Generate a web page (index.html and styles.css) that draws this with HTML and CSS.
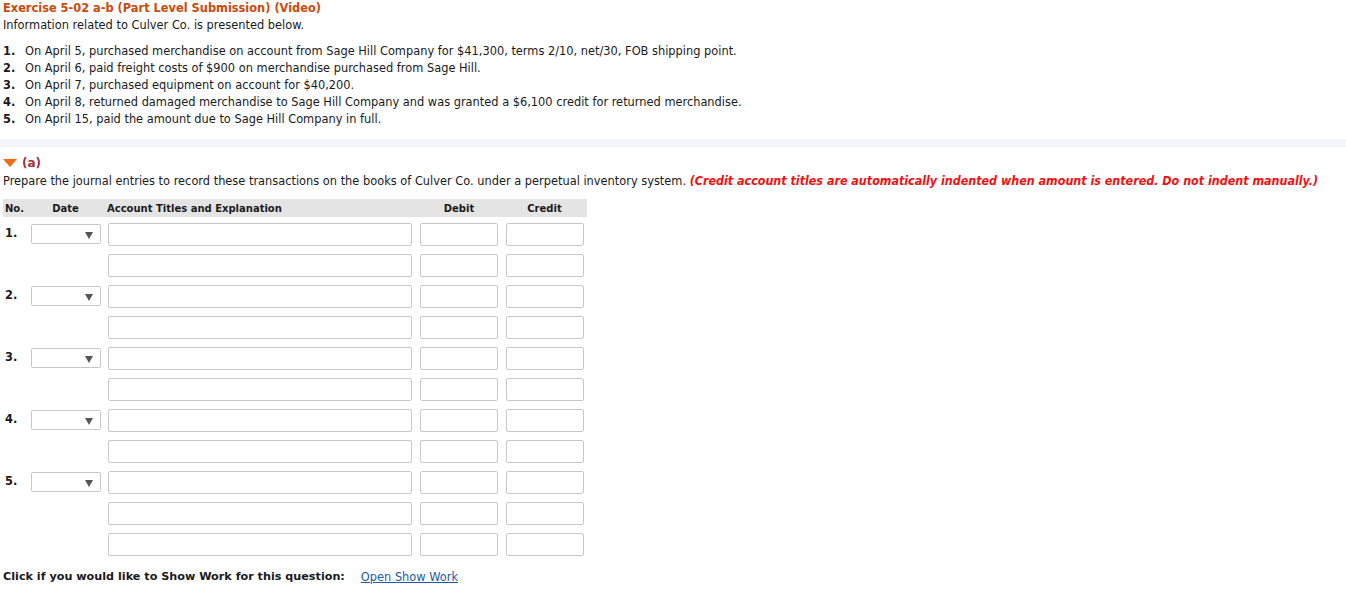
FILE: index.html
```html
<!DOCTYPE html>
<html>
<head>
<meta charset="utf-8">
<link rel="stylesheet" href="styles.css">
</head>
<body>
<div class="page">
  <div class="title">Exercise 5-02 a-b (Part Level Submission) (Video)</div>
  <div class="intro">Information related to Culver Co. is presented below.</div>
  <ol class="items">
    <li><span class="num">1.</span><span>On April 5, purchased merchandise on account from Sage Hill Company for $41,300, terms 2/10, net/30, FOB shipping point.</span></li>
    <li><span class="num">2.</span><span>On April 6, paid freight costs of $900 on merchandise purchased from Sage Hill.</span></li>
    <li><span class="num">3.</span><span>On April 7, purchased equipment on account for $40,200.</span></li>
    <li><span class="num">4.</span><span>On April 8, returned damaged merchandise to Sage Hill Company and was granted a $6,100 credit for returned merchandise.</span></li>
    <li><span class="num">5.</span><span>On April 15, paid the amount due to Sage Hill Company in full.</span></li>
  </ol>
</div>
<div class="band"></div>
<div class="page">
  <div class="part"><span class="tri"></span><span class="part-label">(a)</span></div>
  <div class="prompt">Prepare the journal entries to record these transactions on the books of Culver Co. under a perpetual inventory system. <span class="note">(Credit account titles are automatically indented when amount is entered. Do not indent manually.)</span></div>

  <div class="journal">
    <div class="jrow head">
      <div class="c-no">No.</div>
      <div class="c-date">Date</div>
      <div class="c-acct">Account Titles and Explanation</div>
      <div class="c-dr">Debit</div>
      <div class="c-cr">Credit</div>
    </div>

    <div class="jrow"><div class="c-no lbl">1.</div><div class="c-date"><div class="sel"><span class="arrow"></span></div></div><div class="c-acct"><div class="inp wide"></div></div><div class="c-dr"><div class="inp amt"></div></div><div class="c-cr"><div class="inp amt"></div></div></div>
    <div class="jrow"><div class="c-no"></div><div class="c-date"></div><div class="c-acct"><div class="inp wide"></div></div><div class="c-dr"><div class="inp amt"></div></div><div class="c-cr"><div class="inp amt"></div></div></div>

    <div class="jrow"><div class="c-no lbl">2.</div><div class="c-date"><div class="sel"><span class="arrow"></span></div></div><div class="c-acct"><div class="inp wide"></div></div><div class="c-dr"><div class="inp amt"></div></div><div class="c-cr"><div class="inp amt"></div></div></div>
    <div class="jrow"><div class="c-no"></div><div class="c-date"></div><div class="c-acct"><div class="inp wide"></div></div><div class="c-dr"><div class="inp amt"></div></div><div class="c-cr"><div class="inp amt"></div></div></div>

    <div class="jrow"><div class="c-no lbl">3.</div><div class="c-date"><div class="sel"><span class="arrow"></span></div></div><div class="c-acct"><div class="inp wide"></div></div><div class="c-dr"><div class="inp amt"></div></div><div class="c-cr"><div class="inp amt"></div></div></div>
    <div class="jrow"><div class="c-no"></div><div class="c-date"></div><div class="c-acct"><div class="inp wide"></div></div><div class="c-dr"><div class="inp amt"></div></div><div class="c-cr"><div class="inp amt"></div></div></div>

    <div class="jrow"><div class="c-no lbl">4.</div><div class="c-date"><div class="sel"><span class="arrow"></span></div></div><div class="c-acct"><div class="inp wide"></div></div><div class="c-dr"><div class="inp amt"></div></div><div class="c-cr"><div class="inp amt"></div></div></div>
    <div class="jrow"><div class="c-no"></div><div class="c-date"></div><div class="c-acct"><div class="inp wide"></div></div><div class="c-dr"><div class="inp amt"></div></div><div class="c-cr"><div class="inp amt"></div></div></div>

    <div class="jrow"><div class="c-no lbl">5.</div><div class="c-date"><div class="sel"><span class="arrow"></span></div></div><div class="c-acct"><div class="inp wide"></div></div><div class="c-dr"><div class="inp amt"></div></div><div class="c-cr"><div class="inp amt"></div></div></div>
    <div class="jrow"><div class="c-no"></div><div class="c-date"></div><div class="c-acct"><div class="inp wide"></div></div><div class="c-dr"><div class="inp amt"></div></div><div class="c-cr"><div class="inp amt"></div></div></div>
    <div class="jrow"><div class="c-no"></div><div class="c-date"></div><div class="c-acct"><div class="inp wide"></div></div><div class="c-dr"><div class="inp amt"></div></div><div class="c-cr"><div class="inp amt"></div></div></div>
  </div>

  <div class="showwork"><span class="sw-label">Click if you would like to Show Work for this question:</span><a class="sw-link" href="#">Open Show Work</a></div>
</div>
</body>
</html>
```

FILE: styles.css
```css
html, body {
  margin: 0;
  padding: 0;
  background: #ffffff;
}
body {
  font-family: "DejaVu Sans", Verdana, sans-serif;
  font-size: 11.4px;
  color: #1a1a1a;
}
.page {
  padding-left: 3px;
}
.title {
  font-size: 11.4px;
  font-weight: bold;
  color: #cc4a0a;
  line-height: 14px;
  padding-top: 1px;
}
.intro {
  line-height: 14px;
  margin-top: 3px;
}
.items {
  list-style: none;
  margin: 11px 0 0 0;
  padding: 0;
}
.items li {
  display: flex;
  line-height: 17px;
}
.items .num {
  font-weight: bold;
  width: 22px;
  flex: none;
}
.band {
  height: 8px;
  background: #f4f7fa;
  margin-top: 11px;
}
.part {
  display: flex;
  align-items: center;
  gap: 5px;
  margin-top: 9px;
  height: 14px;
}
.tri {
  width: 0;
  height: 0;
  border-left: 7px solid transparent;
  border-right: 7px solid transparent;
  border-top: 8px solid #f26a1b;
}
.part-label {
  color: #a2303c;
  font-weight: bold;
  font-size: 12px;
}
.prompt {
  margin-top: 4px;
  line-height: 14px;
}
.note {
  color: #ee1111;
  font-weight: bold;
  font-style: italic;
  font-family: "DejaVu Sans Condensed", "DejaVu Sans", sans-serif;
  font-size: 12.4px;
}
.journal {
  margin-top: 11px;
  width: 584px;
  display: flex;
  flex-direction: column;
  gap: 8px;
}
.jrow {
  display: grid;
  grid-template-columns: 28px 73px 312px 86px 85px;
  align-items: start;
}
.jrow.head {
  background: #e4e4e4;
  height: 18px;
  align-items: center;
  font-weight: bold;
  font-size: 10px;
  margin-bottom: -2px;
}
.head .c-no { padding-left: 2px; }
.head .c-date { text-align: center; padding-right: 4px; }
.head .c-acct { padding-left: 3px; }
.head .c-dr, .head .c-cr { text-align: center; }
.lbl {
  font-weight: bold;
  padding-left: 2px;
  line-height: 20px;
}
.sel {
  position: relative;
  width: 68px;
  height: 18px;
  border: 1px solid #c8c8c8;
  border-radius: 2px;
  margin-top: 1px;
  background: #fff;
}
.arrow {
  position: absolute;
  right: 7px;
  top: 7px;
  width: 0;
  height: 0;
  border-left: 4px solid transparent;
  border-right: 4px solid transparent;
  border-top: 7px solid #555;
}
.inp {
  height: 21px;
  border: 1px solid #c8c8c8;
  border-radius: 2px;
  background: #fff;
}
.inp.wide {
  width: 302px;
  margin-left: 4px;
}
.inp.amt {
  width: 76px;
  margin-left: 4px;
}
.showwork {
  margin-top: 14px;
  line-height: 14px;
  display: flex;
  gap: 16px;
}
.sw-label {
  font-weight: bold;
  font-size: 11.2px;
}
.sw-link {
  color: #1f5aa0;
  text-decoration: underline;
}
```
